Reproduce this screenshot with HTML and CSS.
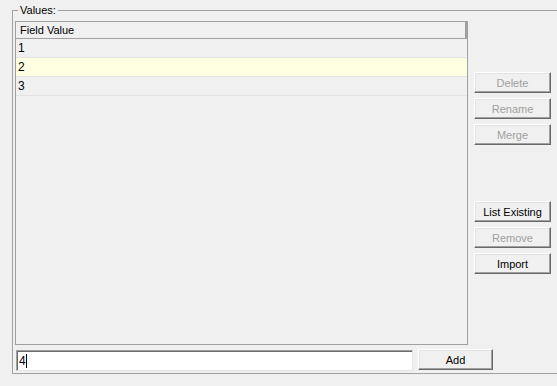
FILE: index.html
```html
<!DOCTYPE html>
<html>
<head>
<meta charset="utf-8">
<link rel="stylesheet" href="styles.css">
</head>
<body>
<div class="group">
  <span class="legend">Values:</span>
  <div class="content">
    <div class="list">
      <div class="header"><span class="col">Field Value</span></div>
      <div class="row">1</div>
      <div class="row sel">2</div>
      <div class="row">3</div>
    </div>
    <div class="buttons">
      <div class="stack top">
        <button class="btn" disabled>Delete</button>
        <button class="btn" disabled>Rename</button>
        <button class="btn" disabled>Merge</button>
      </div>
      <div class="stack bottom">
        <button class="btn">List Existing</button>
        <button class="btn" disabled>Remove</button>
        <button class="btn">Import</button>
      </div>
    </div>
    <div class="addrow">
      <div class="input"><span>4</span><span class="caret"></span></div>
      <button class="btn add">Add</button>
    </div>
  </div>
</div>
</body>
</html>
```
FILE: styles.css
```css
html, body {
  margin: 0;
  padding: 0;
  background: #f0f0f0;
  width: 557px;
  height: 386px;
  overflow: hidden;
  font-family: "Liberation Sans", Arial, sans-serif;
  font-size: 11px;
  color: #000;
}
.group {
  position: relative;
  margin: 10px 0 0 12px;
  width: 560px;
  height: 364px;
  border: 1px solid #a0a0a0;
  border-right: none;
  box-sizing: border-box;
}
.legend {
  position: absolute;
  left: 5px;
  top: -7px;
  padding: 0 2px 0 2px;
  background: #f0f0f0;
  line-height: 12px;
}
.content {
  display: grid;
  grid-template-columns: 453px 77px;
  column-gap: 6px;
  padding: 10px 0 0 2px;
}
.list {
  height: 324px;
  box-sizing: border-box;
  border: 1px solid #a0a0a0;
  background: #f0f0f0;
}
.header {
  height: 17px;
  box-sizing: border-box;
  border-bottom: 1px solid #a0a0a0;
  display: flex;
}
.col {
  flex: 1;
  box-sizing: border-box;
  border-right: 2px solid #a0a0a0;
  padding-left: 4px;
  line-height: 16px;
  background: #f0f0f0;
}
.row {
  height: 19px;
  box-sizing: border-box;
  border-bottom: 1px solid #e3e3e3;
  padding-left: 2px;
  line-height: 19px;
  font-size: 12px;
}
.row.sel {
  background: #ffffe1;
}
.buttons {
  display: flex;
  flex-direction: column;
  padding-top: 51px;
}
.stack {
  display: flex;
  flex-direction: column;
  gap: 5px;
}
.stack.bottom {
  margin-top: 56px;
}
.btn {
  width: 77px;
  height: 21px;
  margin: 0;
  padding: 0;
  box-sizing: border-box;
  background: #f0f0f0;
  border: 1px solid;
  border-color: #ffffff #696969 #696969 #ffffff;
  box-shadow: inset -1px -1px 0 #a0a0a0, inset 1px 1px 0 #e3e3e3;
  font-family: "Liberation Sans", Arial, sans-serif;
  font-size: 11px;
  color: #000;
}
.btn:disabled {
  color: #a0a0a0;
}
.addrow {
  grid-column: 1 / 3;
  display: flex;
  align-items: flex-start;
  padding-top: 5px;
  padding-left: 1px;
}
.input {
  width: 397px;
  height: 21px;
  box-sizing: border-box;
  background: #fff;
  border: 1px solid;
  border-color: #a0a0a0 #e3e3e3 #e3e3e3 #a0a0a0;
  box-shadow: inset 1px 1px 0 #696969;
  padding-left: 2px;
  display: flex;
  align-items: center;
  font-size: 12px;
}
.caret {
  display: inline-block;
  width: 1px;
  height: 14px;
  background: #000;
  margin-left: 0;
}
.btn.add {
  width: 75px;
  margin-left: 5px;
  margin-top: -1px;
}
```
